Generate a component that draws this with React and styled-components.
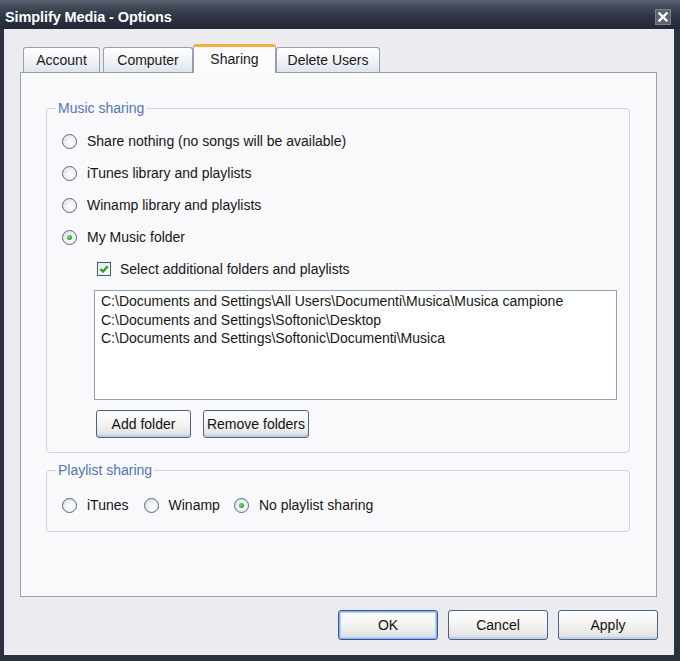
import React from 'react';
import styled, { createGlobalStyle } from 'styled-components';

const Global = createGlobalStyle`
  html, body { margin: 0; padding: 0; background: #2a303d; }
  body { font-family: "Liberation Sans", Arial, sans-serif; font-size: 14px; color: #161616; }
  * { box-sizing: border-box; }
`;

const Window = styled.div`
  width: 680px;
  height: 661px;
  display: flex;
  flex-direction: column;
  background: #2b313e;
`;

const TitleBar = styled.div`
  height: 29px;
  flex: none;
  display: flex;
  align-items: flex-start;
  justify-content: space-between;
  padding: 9px 9px 0 5px;
  background: linear-gradient(#5a6270 0%, #414959 25%, #2c3343 60%, #222836 100%);
`;

const Title = styled.div`
  font-weight: bold;
  font-size: 14.5px;
  line-height: 16px;
  color: #ffffff;
  letter-spacing: -0.1px;
`;

const CloseButton = styled.div`
  width: 16px;
  height: 16px;
  display: flex;
  align-items: center;
  justify-content: center;
  background: #5c6270;
  border: 1px solid #7c818c;
`;

const Frame = styled.div`
  flex: 1;
  display: flex;
  padding: 0 6px 6px 4px;
`;

const Body = styled.div`
  flex: 1;
  display: flex;
  flex-direction: column;
  background: #ecebf0;
  padding: 15px 17px 15px 16px;
`;

const TabStrip = styled.div`
  height: 28px;
  display: flex;
  align-items: flex-end;
  padding-left: 3px;
  position: relative;
  z-index: 1;
`;

const Tab = styled.div`
  width: ${p => p.$w}px;
  margin-right: ${p => p.$mr || 0}px;
  height: ${p => (p.$active ? 29 : 25)}px;
  margin-bottom: ${p => (p.$active ? -1 : 0)}px;
  display: flex;
  align-items: center;
  justify-content: center;
  border: 1px solid #95a1b3;
  border-bottom: none;
  border-top: ${p => (p.$active ? '3px solid #f3b042' : '1px solid #95a1b3')};
  border-radius: 3px 3px 0 0;
  background: ${p => (p.$active ? '#fbfbfc' : 'linear-gradient(#ffffff 0%, #f4f5f8 45%, #dfe4ee 100%)')};
  color: #1a1a1a;
  padding-bottom: ${p => (p.$active ? 2 : 0)}px;
`;

const Panel = styled.div`
  flex: 1;
  display: flex;
  flex-direction: column;
  gap: 9px;
  border: 1px solid #94a0b4;
  background: #f9f9fb;
  padding: 27px 26px 0 25px;
`;

const Group = styled.fieldset`
  margin: 0;
  border: 1px solid #d2d2d9;
  border-radius: 4px;
  padding: ${p => p.$pt}px 12px ${p => p.$pb}px 15px;
  min-width: 0;
`;

const Legend = styled.legend`
  color: #5574b8;
  font-size: 14px;
  line-height: 16px;
  padding: 0 2px;
  margin-left: -6px;
`;

const Row = styled.div`
  height: 32px;
  display: flex;
  align-items: center;
`;

const Option = styled.label`
  display: flex;
  align-items: center;
  gap: 10px;
  margin-right: ${p => p.$mr || 0}px;
  white-space: nowrap;
`;

const RadioDot = styled.span`
  width: 15px;
  height: 15px;
  flex: none;
  border-radius: 50%;
  border: 1px solid #4f6886;
  background: radial-gradient(circle at 65% 65%, #ffffff 0%, #f4f4f4 40%, #d6d6dc 100%);
  display: flex;
  align-items: center;
  justify-content: center;
  &::after {
    content: '';
    display: ${p => (p.$checked ? 'block' : 'none')};
    width: 5px;
    height: 5px;
    border-radius: 50%;
    background: radial-gradient(circle at 40% 40%, #7fe07f 0%, #2ea82e 60%, #1f8a1f 100%);
  }
`;

const CheckBox = styled.span`
  width: 14px;
  height: 14px;
  flex: none;
  border: 1px solid #3b5b82;
  background: linear-gradient(135deg, #e6e6e0 0%, #f8f8f6 60%, #ffffff 100%);
  display: flex;
  align-items: center;
  justify-content: center;
`;

const Indented = styled.div`
  margin-left: 32px;
  display: flex;
  flex-direction: column;
`;

const CheckRow = styled(Row)`
  padding-left: 3px;
`;

const CheckOption = styled(Option)`
  gap: 9px;
`;

const ListBox = styled.div`
  margin-top: 5px;
  height: 110px;
  border: 1px solid #8fa0b8;
  background: #ffffff;
  padding: 1px 6px;
  line-height: 18.5px;
  white-space: nowrap;
  overflow: hidden;
`;

const ButtonRow = styled.div`
  display: flex;
  gap: ${p => p.$gap}px;
  margin-top: ${p => p.$mt}px;
  margin-left: ${p => p.$ml || 0}px;
  margin-right: ${p => p.$mr || 0}px;
  justify-content: ${p => p.$justify || 'flex-start'};
`;

const Button = styled.button`
  font-family: "Liberation Sans", Arial, sans-serif;
  font-size: 14px;
  color: #111111;
  width: ${p => p.$w}px;
  height: ${p => p.$h}px;
  padding: 0;
  border: 1px solid ${p => (p.$default ? '#345a9c' : '#4a6289')};
  border-radius: 3px;
  background: linear-gradient(#ffffff 0%, #f7f7f6 35%, #ebebe8 75%, #d3d9e6 100%);
  box-shadow: ${p => (p.$default
    ? 'inset 0 0 0 1px #8fb2ea, inset 0 0 0 2px #b9cff3'
    : 'inset 0 -2px 0 #c4cde0')};
`;

const Spacer = styled.div`
  flex: 1;
`;

function Radio({ checked, children, mr }) {
  return (
    <Option $mr={mr}>
      <RadioDot $checked={checked} />
      <span>{children}</span>
    </Option>
  );
}

export default function App() {
  return (
    <>
      <Global />
      <Window>
        <TitleBar>
          <Title>Simplify Media - Options</Title>
          <CloseButton>
            <svg width="10" height="10" viewBox="0 0 10 10">
              <path d="M1.5 1.5 L8.5 8.5 M8.5 1.5 L1.5 8.5" stroke="#ffffff" strokeWidth="2.4" strokeLinecap="square" />
            </svg>
          </CloseButton>
        </TitleBar>
        <Frame>
          <Body>
            <TabStrip>
              <Tab $w={77} $mr={3}>Account</Tab>
              <Tab $w={90}>Computer</Tab>
              <Tab $w={83} $active>Sharing</Tab>
              <Tab $w={104}>Delete Users</Tab>
            </TabStrip>
            <Panel>
              <Group $pt={9} $pb={14}>
                <Legend>Music sharing</Legend>
                <Row><Radio>Share nothing (no songs will be available)</Radio></Row>
                <Row><Radio>iTunes library and playlists</Radio></Row>
                <Row><Radio>Winamp library and playlists</Radio></Row>
                <Row><Radio checked>My Music folder</Radio></Row>
                <Indented>
                  <CheckRow>
                    <CheckOption>
                      <CheckBox>
                        <svg width="10" height="10" viewBox="0 0 10 10">
                          <path d="M1.3 5 L4 7.6 L8.8 2.2" fill="none" stroke="#22a322" strokeWidth="2.2" />
                        </svg>
                      </CheckBox>
                      <span>Select additional folders and playlists</span>
                    </CheckOption>
                  </CheckRow>
                  <ListBox>
                    <div>C:\Documents and Settings\All Users\Documenti\Musica\Musica campione</div>
                    <div>C:\Documents and Settings\Softonic\Desktop</div>
                    <div>C:\Documents and Settings\Softonic\Documenti\Musica</div>
                  </ListBox>
                  <ButtonRow $gap={12} $mt={10} $ml={2}>
                    <Button $w={95} $h={28}>Add folder</Button>
                    <Button $w={106} $h={28}>Remove folders</Button>
                  </ButtonRow>
                </Indented>
              </Group>
              <Group $pt={11} $pb={10}>
                <Legend>Playlist sharing</Legend>
                <Row>
                  <Radio mr={15}>iTunes</Radio>
                  <Radio mr={14}>Winamp</Radio>
                  <Radio checked>No playlist sharing</Radio>
                </Row>
              </Group>
              <Spacer />
            </Panel>
            <ButtonRow $gap={10} $mt={13} $mr={-1} $justify="flex-end">
              <Button $w={100} $h={30} $default>OK</Button>
              <Button $w={100} $h={30}>Cancel</Button>
              <Button $w={100} $h={30}>Apply</Button>
            </ButtonRow>
          </Body>
        </Frame>
      </Window>
    </>
  );
}
